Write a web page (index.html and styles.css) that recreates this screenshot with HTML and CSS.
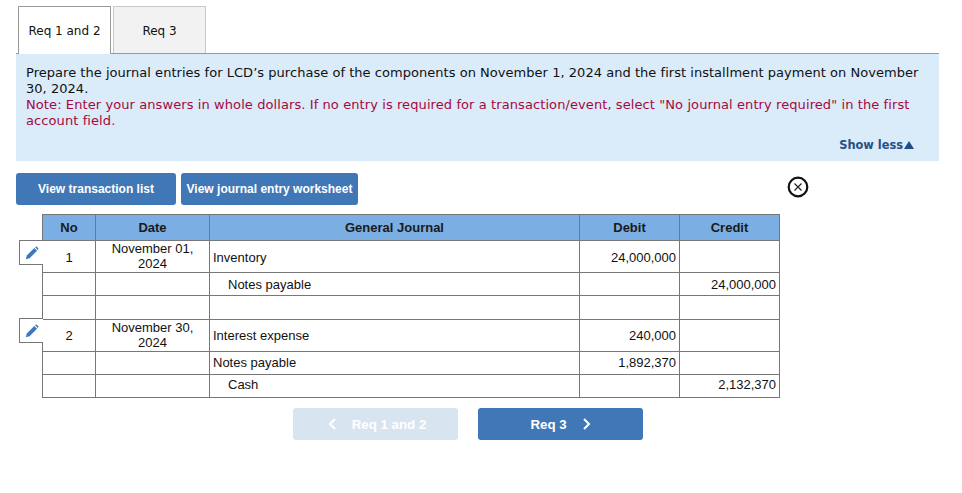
FILE: index.html
```html
<!DOCTYPE html>
<html>
<head>
    <title>Req 1 and 2</title>
    <link rel="stylesheet" href="styles.css">
</head>
<body>
    <div class="tabs">
        <div class="tab active">Req 1 and 2</div>
        <div class="tab">Req 3</div>
    </div>
    <div class="panel">
        <p>Prepare the journal entries for LCD’s purchase of the components on November 1, 2024 and the first installment payment on November 30, 2024.<br>
        <span class="note">Note: Enter your answers in whole dollars. If no entry is required for a transaction/event, select "No journal entry required" in the first account field.</span></p>
        <a class="show-less">Show less<span class="arrow"></span></a>
    </div>
    <div class="actions">
        <button class="btn btn-list">View transaction list</button>
        <button class="btn btn-sheet">View journal entry worksheet</button>
        <svg class="close" width="22" height="22" viewBox="0 0 22 22">
            <circle cx="11" cy="11" r="9.3" fill="none" stroke="#111" stroke-width="2.2"/>
            <path d="M7.5 7.5l7 7M14.5 7.5l-7 7" fill="none" stroke="#222" stroke-width="1.2"/>
        </svg>
    </div>
    <table class="journal">
        <colgroup>
            <col class="c-no"><col class="c-date"><col class="c-account"><col class="c-amount"><col class="c-amount">
        </colgroup>
        <thead>
            <tr><th>No</th><th>Date</th><th>General Journal</th><th>Debit</th><th>Credit</th></tr>
        </thead>
        <tbody>
            <tr class="r-tall">
                <td class="center no-cell">
                    <span class="edit"><svg width="14" height="14" viewBox="0 0 16 16"><path d="M1 15l1-4.2L10.6 2.2l3.2 3.2L5.2 14z" fill="#3f78b8"/><path d="M11.5 1.4l.8-.6c.4-.3.9-.3 1.2 0l1.7 1.7c.3.3.3.8 0 1.2l-.6.8z" fill="#3f78b8"/></svg></span>
                    1
                </td>
                <td class="center date">November 01, 2024</td>
                <td>Inventory</td>
                <td class="num">24,000,000</td>
                <td></td>
            </tr>
            <tr class="r-mid">
                <td></td><td></td><td class="indent">Notes payable</td><td></td><td class="num">24,000,000</td>
            </tr>
            <tr class="r-gap">
                <td></td><td></td><td></td><td></td><td></td>
            </tr>
            <tr class="r-tall r-second">
                <td class="center no-cell">
                    <span class="edit"><svg width="14" height="14" viewBox="0 0 16 16"><path d="M1 15l1-4.2L10.6 2.2l3.2 3.2L5.2 14z" fill="#3f78b8"/><path d="M11.5 1.4l.8-.6c.4-.3.9-.3 1.2 0l1.7 1.7c.3.3.3.8 0 1.2l-.6.8z" fill="#3f78b8"/></svg></span>
                    2
                </td>
                <td class="center date">November 30, 2024</td>
                <td>Interest expense</td>
                <td class="num">240,000</td>
                <td></td>
            </tr>
            <tr class="r-mid r-raised">
                <td></td><td></td><td>Notes payable</td><td class="num">1,892,370</td><td></td>
            </tr>
            <tr class="r-mid r-raised-more">
                <td></td><td></td><td class="indent">Cash</td><td></td><td class="num">2,132,370</td>
            </tr>
        </tbody>
    </table>
    <div class="pager">
        <button class="btn page-btn disabled">
            <svg width="9" height="12" viewBox="0 0 9 12"><path d="M7 1L2 6l5 5" fill="none" stroke="#fff" stroke-width="2"/></svg>
            <span>Req 1 and 2</span>
        </button>
        <button class="btn page-btn">
            <span>Req 3</span>
            <svg width="9" height="12" viewBox="0 0 9 12"><path d="M2 1l5 5-5 5" fill="none" stroke="#fff" stroke-width="2"/></svg>
        </button>
    </div>
</body>
</html>
```

FILE: styles.css
```css
body {
    margin: 0;
    background: #fff;
    color: #111;
    font-family: "Liberation Sans", Arial, sans-serif;
}
.tabs {
    display: flex;
    gap: 2px;
    margin: 6px 23px 0 16px;
    padding-left: 2px;
    border-bottom: 1px solid #999;
    height: 47px;
}
.tab {
    width: 91px;
    height: 46px;
    border: 1px solid #c8c8c8;
    border-bottom: none;
    background: #f2f2f2;
    font: 12px/48px "DejaVu Sans", Verdana, sans-serif;
    text-align: center;
}
.tab.active {
    height: 47px;
    border-color: #999;
    background: #fff;
}
.panel {
    margin: 0 23px 0 16px;
    height: 107px;
    padding: 11px 10px 0;
    box-sizing: border-box;
    background: #daebfa;
    position: relative;
    font: 13px/16px "DejaVu Sans", Verdana, sans-serif;
    letter-spacing: 0.035px;
}
.panel p {
    margin: 0;
}
.note {
    color: #a6093d;
    letter-spacing: 0.09px;
}
.show-less {
    position: absolute;
    right: 25px;
    bottom: 8px;
    display: flex;
    align-items: center;
    gap: 1px;
    font-size: 11.4px;
    font-weight: bold;
    color: #2a4f85;
    letter-spacing: 0;
}
.arrow {
    width: 0;
    height: 0;
    border-left: 5.5px solid transparent;
    border-right: 5.5px solid transparent;
    border-bottom: 8px solid #1f4e86;
}
.btn {
    border: none;
    border-radius: 3px;
    background: #4077b6;
    color: #fff;
    font-family: "Liberation Sans", Arial, sans-serif;
    font-weight: bold;
    padding: 0;
}
.actions {
    display: flex;
    align-items: flex-start;
    margin: 12px 0 0 16px;
}
.actions .btn {
    height: 32px;
    font-size: 12px;
}
.btn-list {
    width: 160px;
}
.btn-sheet {
    width: 177px;
    margin-left: 5px;
}
.close {
    margin: 3px 0 0 429px;
}
.journal {
    margin: 9px 0 0 42px;
    border-collapse: collapse;
    table-layout: fixed;
    width: 738px;
    font-size: 13px;
    line-height: 15px;
}
.c-no { width: 53px; }
.c-date { width: 114px; }
.c-account { width: 370px; }
.c-amount { width: 100px; }
.journal th,
.journal td {
    border: 1px solid #777;
    padding: 0 3px;
}
.journal th {
    height: 25px;
    background: #7baee3;
    font-weight: bold;
    color: #1a1a1a;
}
.r-tall td { height: 30px; padding-top: 1px; }
.r-mid td { height: 22px; }
.r-gap td { height: 23px; }
.journal .r-second td { height: 31px; padding-top: 0; }
.journal .r-raised td { height: 20px; padding-bottom: 2px; }
.journal .r-raised-more td { height: 19px; padding-bottom: 3px; }
.journal .center {
    text-align: center;
}
.journal .date {
    padding: 0 10px 1px;
}
.journal .r-second .date {
    height: 30px;
}
.num {
    text-align: right;
}
.journal .indent {
    padding-left: 18px;
}
.no-cell {
    position: relative;
}
.edit {
    position: absolute;
    left: -24px;
    top: -1px;
    width: 23px;
    height: 23px;
    border: 1px solid #777;
    border-right: none;
    background: #fff;
    display: flex;
    align-items: center;
    justify-content: center;
}
.r-second .edit {
    top: -2px;
}
.pager {
    display: flex;
    gap: 20px;
    margin: 10px 0 0 293px;
}
.page-btn {
    width: 165px;
    height: 32px;
    font-size: 13.3px;
    display: flex;
    align-items: center;
    justify-content: center;
    gap: 15px;
}
.page-btn.disabled {
    background: #d9e4f1;
    padding-left: 3px;
}
```
